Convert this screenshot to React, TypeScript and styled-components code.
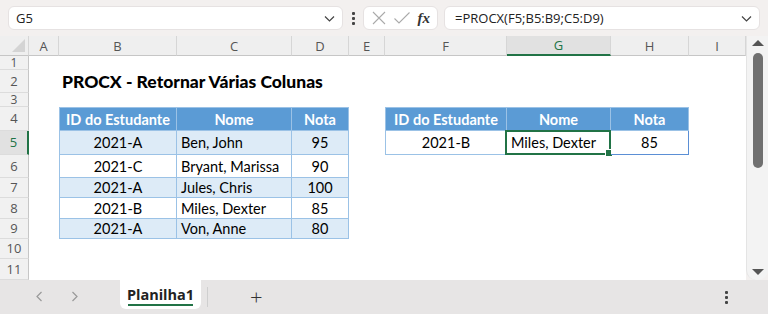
import styled, { createGlobalStyle, css } from "styled-components";

const GlobalStyle = createGlobalStyle`
  html, body {
    margin: 0;
    padding: 0;
    width: 768px;
    height: 314px;
    overflow: hidden;
    background: #ffffff;
  }
  * {
    box-sizing: border-box;
  }
`;

const UI = `"Open Sans", "Noto Sans", sans-serif`;
const CELL = `Lato, "Liberation Sans", sans-serif`;

const Window = styled.div`
  width: 768px;
  height: 314px;
  display: flex;
  flex-direction: column;
  background: #f3f0ef;
  font-family: ${UI};
`;

/* ---------- formula bar ---------- */

const TopBar = styled.div`
  height: 36px;
  display: flex;
  align-items: center;
  padding: 0 8px;
  gap: 6px;
`;

const NameBox = styled.div`
  width: 335px;
  height: 24px;
  background: #fff;
  border-radius: 6px;
  border: 1px solid #e6e2e2;
  display: flex;
  align-items: center;
  justify-content: space-between;
  padding: 0 6px 0 7px;
  font-size: 13px;
  color: #222;
`;

const Dots = styled.div`
  width: 8px;
  display: flex;
  flex-direction: column;
  align-items: center;
  gap: 2px;
  span {
    width: 3px;
    height: 3px;
    border-radius: 1px;
    background: #444;
  }
`;

const FuncBox = styled.div`
  width: 75px;
  height: 24px;
  background: #fff;
  border-radius: 6px;
  border: 1px solid #e6e2e2;
  display: flex;
  align-items: center;
  justify-content: space-around;
  padding: 0 4px;
`;

const Fx = styled.span`
  font-family: "Liberation Serif", serif;
  font-style: italic;
  font-weight: bold;
  font-size: 15px;
  color: #333;
`;

const FormulaBox = styled.div`
  flex: 1;
  height: 24px;
  background: #fff;
  border-radius: 6px;
  border: 1px solid #e6e2e2;
  display: flex;
  align-items: center;
  justify-content: space-between;
  padding: 0 6px 0 10px;
  font-size: 13px;
  color: #222;
`;

/* ---------- sheet ---------- */

const Main = styled.div`
  display: flex;
  height: 244px;
`;

const Sheet = styled.div`
  width: 746px;
  display: grid;
  grid-template-columns: 29px 30px 118px 115px 57px 36px 122px 104px 78px 57px;
  grid-template-rows: 20px 14px 23px 14px 24px 24px 23px 20px 21px 20px 20px 21px;
  background: #fff;
`;

const Corner = styled.div`
  background: #efefef;
  border-right: 1px solid #d6d6d6;
  border-bottom: 1px solid #c6c6c6;
  position: relative;
  &::after {
    content: "";
    position: absolute;
    right: 3px;
    bottom: 3px;
    width: 0;
    height: 0;
    border-left: 13px solid transparent;
    border-bottom: 13px solid #d4d4d4;
  }
`;

const ColHead = styled.div<{ $active?: boolean }>`
  background: ${(p) => (p.$active ? "#e1e1e1" : "#efefef")};
  border-right: 1px solid #d6d6d6;
  border-bottom: ${(p) => (p.$active ? "2px solid #217346" : "1px solid #c6c6c6")};
  display: flex;
  align-items: center;
  justify-content: center;
  font-size: 13px;
  color: ${(p) => (p.$active ? "#217346" : "#555")};
`;

const RowHead = styled.div<{ $active?: boolean; $short?: boolean }>`
  background: ${(p) => (p.$active ? "#e1e1e1" : "#f1f1f1")};
  border-right: ${(p) => (p.$active ? "2px solid #217346" : "1px solid #c6c6c6")};
  border-bottom: 1px solid #dcdcdc;
  display: flex;
  align-items: center;
  justify-content: center;
  font-size: ${(p) => (p.$short ? "12px" : "13px")};
  color: ${(p) => (p.$active ? "#217346" : "#555")};
  overflow: hidden;
  line-height: 1;
`;

type Kind = "blank" | "head" | "band" | "plain";

const Cell = styled.div<{
  $kind: Kind;
  $align?: "left" | "center";
  $left?: boolean;
  $top?: boolean;
  $edge?: string;
}>`
  font-family: ${CELL};
  font-size: 14.5px;
  color: #000;
  display: flex;
  align-items: center;
  justify-content: ${(p) => (p.$align === "left" ? "flex-start" : "center")};
  padding: 0 4px;
  white-space: nowrap;
  position: relative;
  ${(p) =>
    p.$kind !== "blank" &&
    css`
      border-right: 1px solid ${p.$edge ?? "#9bc2e6"};
      border-bottom: 1px solid ${p.$edge ?? "#9bc2e6"};
      ${p.$left && "border-left: 1px solid #9bc2e6;"}
      ${p.$top && "border-top: 1px solid #9bc2e6;"}
    `}
  ${(p) =>
    p.$kind === "head" &&
    css`
      background: #5b9bd5;
      color: #fff;
      font-weight: bold;
    `}
  ${(p) => p.$kind === "band" && "background: #ddebf7;"}
  ${(p) => p.$kind === "plain" && "background: #fff;"}
`;

const Title = styled.div`
  font-family: ${CELL};
  font-weight: 900;
  font-size: 17.5px;
  color: #000;
  white-space: nowrap;
  display: flex;
  align-items: center;
  padding-left: 3px;
  overflow: visible;
`;

const Selection = styled.div`
  position: absolute;
  inset: -1px -1px -1px -2px;
  border: 2px solid #217346;
  pointer-events: none;
  &::after {
    content: "";
    position: absolute;
    right: -4px;
    bottom: -4px;
    width: 6px;
    height: 6px;
    background: #217346;
    border: 1px solid #fff;
  }
`;

const ScrollBar = styled.div`
  width: 22px;
  background: #f3f3f3;
  border-left: 1px solid #e4e4e4;
  border-radius: 0 0 10px 10px;
  display: flex;
  flex-direction: column;
  align-items: center;
  padding-top: 4px;
  padding-bottom: 5px;
`;

const Arrow = styled.div<{ $down?: boolean }>`
  width: 0;
  height: 0;
  border-left: 6px solid transparent;
  border-right: 6px solid transparent;
  ${(p) =>
    p.$down
      ? "border-top: 6px solid #555; margin-top: auto;"
      : "border-bottom: 6px solid #555;"}
`;

const Thumb = styled.div`
  width: 10px;
  height: 115px;
  margin-top: 7px;
  border-radius: 5px;
  background: #707070;
`;

/* ---------- tab bar ---------- */

const TabBar = styled.div`
  flex: 1;
  background: #e7e5e5;
  display: flex;
  align-items: flex-start;
  padding-left: 22px;
`;

const NavBtn = styled.div`
  width: 35px;
  height: 32px;
  display: flex;
  align-items: center;
  justify-content: center;
`;

const Tab = styled.div`
  margin-left: 28px;
  width: 81px;
  height: 29px;
  background: #fff;
  border-radius: 0 0 6px 6px;
  display: flex;
  align-items: center;
  justify-content: center;
  position: relative;
  font-family: ${UI};
  font-weight: bold;
  font-size: 14.5px;
  color: #222;
  &::after {
    content: "";
    position: absolute;
    left: 8px;
    right: 8px;
    bottom: 3px;
    height: 2px;
    background: #217346;
  }
`;

const Sep = styled.div`
  width: 1px;
  height: 20px;
  background: #cfcfcf;
  margin: 7px 0 0 6px;
`;

const AddBtn = styled.div`
  margin-left: 42px;
  height: 32px;
  display: flex;
  align-items: center;
  font-size: 22px;
  font-weight: 300;
  color: #333;
`;

const TabDots = styled(Dots)`
  margin-left: auto;
  margin-right: 38px;
  margin-top: 11px;
`;

const Chevron = ({ dir }: { dir: "down" | "left" | "right" }) => {
  const d =
    dir === "down"
      ? "M2 4.5 L6.5 9 L11 4.5"
      : dir === "left"
      ? "M8.5 2 L4 6.5 L8.5 11"
      : "M4.5 2 L9 6.5 L4.5 11";
  return (
    <svg width="13" height="13" viewBox="0 0 13 13">
      <path d={d} fill="none" stroke={dir === "down" ? "#444" : "#999"} strokeWidth="1.2" />
    </svg>
  );
};

const cols = ["A", "B", "C", "D", "E", "F", "G", "H", "I"];

const students = [
  ["2021-A", "Ben, John", "95"],
  ["2021-C", "Bryant, Marissa", "90"],
  ["2021-A", "Jules, Chris", "100"],
  ["2021-B", "Miles, Dexter", "85"],
  ["2021-A", "Von, Anne", "80"],
];

const heads = ["ID do Estudante", "Nome", "Nota"];

function Blank({ n }: { n: number }) {
  return (
    <>
      {Array.from({ length: n }, (_, i) => (
        <Cell key={i} $kind="blank" />
      ))}
    </>
  );
}

export default function App() {
  const rows: JSX.Element[] = [];

  // row 1
  rows.push(
    <RowHead key="r1" $short>
      1
    </RowHead>,
    <Blank key="b1" n={9} />
  );
  // row 2
  rows.push(
    <RowHead key="r2">2</RowHead>,
    <Cell key="a2" $kind="blank" />,
    <Title key="t2">PROCX - Retornar Várias Colunas</Title>,
    <Blank key="b2" n={7} />
  );
  // row 3
  rows.push(
    <RowHead key="r3" $short>
      3
    </RowHead>,
    <Blank key="b3" n={9} />
  );
  // row 4 headers
  rows.push(
    <RowHead key="r4">4</RowHead>,
    <Cell key="a4" $kind="blank" />,
    ...heads.map((h, i) => (
      <Cell key={"h1" + i} $kind="head" $top $left={i === 0}>
        {h}
      </Cell>
    )),
    <Cell key="e4" $kind="blank" />,
    ...heads.map((h, i) => (
      <Cell key={"h2" + i} $kind="head" $top $left={i === 0}>
        {h}
      </Cell>
    )),
    <Cell key="i4" $kind="blank" />
  );
  // rows 5-9
  students.forEach((s, r) => {
    const kind: Kind = r % 2 === 0 ? "band" : "plain";
    const n = r + 5;
    rows.push(
      <RowHead key={"r" + n} $active={n === 5}>
        {n}
      </RowHead>,
      <Cell key={"a" + n} $kind="blank" />,
      <Cell key={"b" + n} $kind={kind} $left>
        {s[0]}
      </Cell>,
      <Cell key={"c" + n} $kind={kind} $align="left">
        {s[1]}
      </Cell>,
      <Cell key={"d" + n} $kind={kind}>
        {s[2]}
      </Cell>,
      <Cell key={"e" + n} $kind="blank" />
    );
    if (n === 5) {
      rows.push(
        <Cell key="f5" $kind="plain" $left>
          2021-B
        </Cell>,
        <Cell key="g5" $kind="plain" $align="left">
          Miles, Dexter
          <Selection />
        </Cell>,
        <Cell key="h5" $kind="plain" $edge="#5b8fd5">
          85
        </Cell>,
        <Cell key="i5" $kind="blank" />
      );
    } else {
      rows.push(<Blank key={"x" + n} n={4} />);
    }
  });
  rows.push(<RowHead key="r10">10</RowHead>, <Blank key="b10" n={9} />);
  rows.push(<RowHead key="r11">11</RowHead>, <Blank key="b11" n={9} />);

  return (
    <>
      <GlobalStyle />
      <Window>
        <TopBar>
          <NameBox>
            G5
            <Chevron dir="down" />
          </NameBox>
          <Dots>
            <span />
            <span />
            <span />
          </Dots>
          <FuncBox>
            <svg width="16" height="16" viewBox="0 0 16 16">
              <path d="M2 2 L14 14 M14 2 L2 14" stroke="#aaa" strokeWidth="1.1" fill="none" />
            </svg>
            <svg width="18" height="16" viewBox="0 0 18 16">
              <path d="M1.5 8.5 L6 13 L16.5 2.5" stroke="#aaa" strokeWidth="1.1" fill="none" />
            </svg>
            <Fx>fx</Fx>
          </FuncBox>
          <FormulaBox>
            =PROCX(F5;B5:B9;C5:D9)
            <Chevron dir="down" />
          </FormulaBox>
        </TopBar>
        <Main>
          <Sheet>
            <Corner />
            {cols.map((c) => (
              <ColHead key={c} $active={c === "G"}>
                {c}
              </ColHead>
            ))}
            {rows}
          </Sheet>
          <ScrollBar>
            <Arrow />
            <Thumb />
            <Arrow $down />
          </ScrollBar>
        </Main>
        <TabBar>
          <NavBtn>
            <Chevron dir="left" />
          </NavBtn>
          <NavBtn>
            <Chevron dir="right" />
          </NavBtn>
          <Tab>Planilha1</Tab>
          <Sep />
          <AddBtn>+</AddBtn>
          <TabDots>
            <span />
            <span />
            <span />
          </TabDots>
        </TabBar>
      </Window>
    </>
  );
}
